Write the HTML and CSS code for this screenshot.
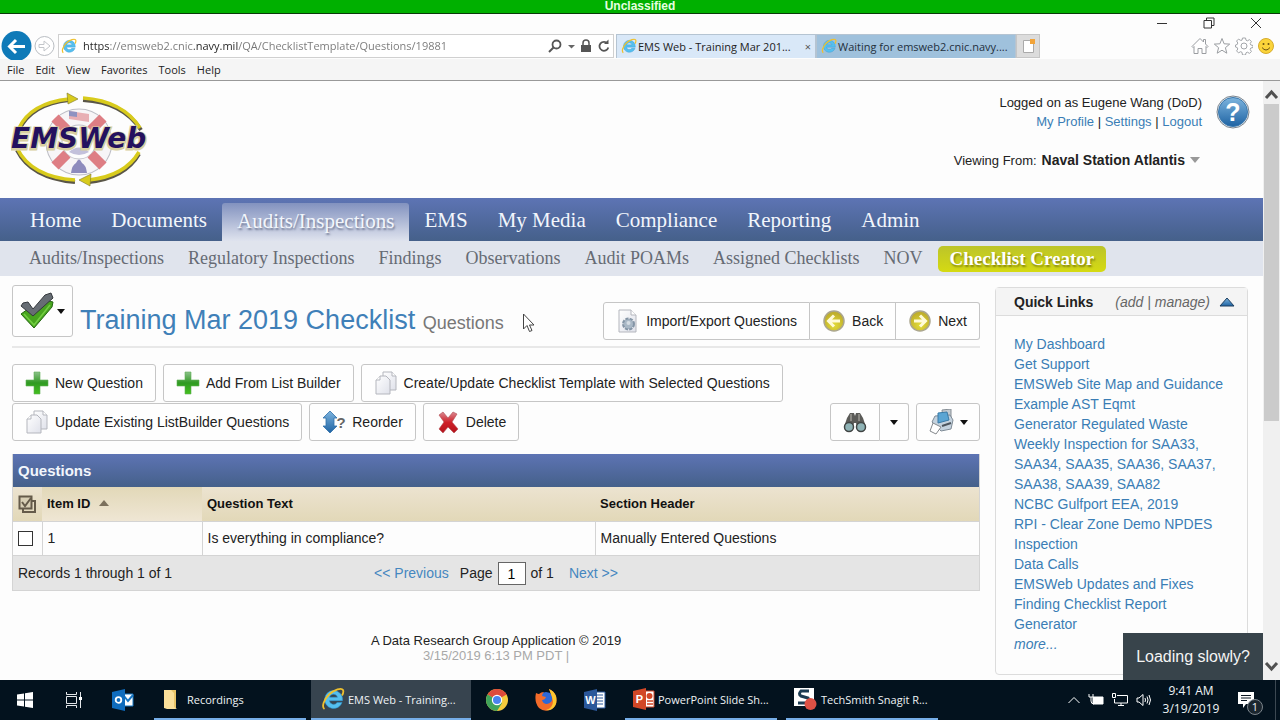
FILE: index.html
```
<!DOCTYPE html>
<html lang="en">
<head>
  <meta charset="UTF-8">
  <meta name="viewport" content="width=device-width, initial-scale=1">
  <title>EMS Web - Training Mar 2019 Checklist</title>
  <link rel="stylesheet" href="styles.css">
</head>
<body>
  <!-- shared icons -->
  <svg class="sprite" width="0" height="0" aria-hidden="true">
    <defs>
      <linearGradient id="greenGrad" x1="0" y1="0" x2="0" y2="1"><stop offset="0" stop-color="#8cc08a"/><stop offset=".5" stop-color="#2f9a22"/><stop offset="1" stop-color="#44c01e"/></linearGradient>
      <linearGradient id="redGrad" x1="0" y1="0" x2="0" y2="1"><stop offset="0" stop-color="#d98a92"/><stop offset=".5" stop-color="#cf1f27"/><stop offset="1" stop-color="#b3141c"/></linearGradient>
      <linearGradient id="blueGrad" x1="0" y1="0" x2="0" y2="1"><stop offset="0" stop-color="#7db4de"/><stop offset="1" stop-color="#1e63a3"/></linearGradient>
      <linearGradient id="pageGrad" x1="0" y1="0" x2="1" y2="1"><stop offset="0" stop-color="#ffffff"/><stop offset="1" stop-color="#dfe1ea"/></linearGradient>
      <radialGradient id="goldGrad" cx=".5" cy=".7" r=".6"><stop offset="0" stop-color="#e3dc3a"/><stop offset="1" stop-color="#bfae2b"/></radialGradient>
    </defs>
    <symbol id="i-plus" viewBox="0 0 24 24"><path d="M9 1h6v8h8v6h-8v8H9v-8H1V9h8z" fill="url(#greenGrad)" stroke="#5fae55" stroke-width=".6"/></symbol>
    <symbol id="i-pages" viewBox="0 0 24 24">
      <path d="M9 1h9l4 4v14H9z" fill="url(#pageGrad)" stroke="#b4b6bd"/>
      <path d="M18 1v4h4" fill="#fff" stroke="#b4b6bd"/>
      <path d="M6 5h6l4 4v14H2V9z" fill="url(#pageGrad)" stroke="#b4b6bd"/>
      <path d="M6 5v4H2" fill="#fff" stroke="#b4b6bd"/>
    </symbol>
    <symbol id="i-ie" viewBox="0 0 24 24">
      <path d="M12.500 3.500a9 9 0 1 0 8.600 12h-5a4.300 4.300 0 0 1-7.800-1.800H21.500A9 9 0 0 0 12.500 3.500zM8.500 10.200a4.200 4.200 0 0 1 8 0z" fill="#55bfee" stroke="#2b93d1" stroke-width=".5" fill-rule="evenodd"/>
      <path d="M3.500 22C.5 20 2.500 13 8 7.500 13.500 2.500 20.500.5 22 3c.7 1.400.2 3.500-1 5.500" fill="none" stroke="#eec02e" stroke-width="1.800"/>
    </symbol>
  </svg>

  <div class="banner">Unclassified</div>

  <!-- browser window -->
  <div class="browser">
    <div class="titlebar">
      <button class="win-btn" aria-label="Minimize"><svg width="12" height="12" viewBox="0 0 12 12"><path d="M1 6.500h10" stroke="#333"/></svg></button>
      <button class="win-btn" aria-label="Restore"><svg width="12" height="12" viewBox="0 0 12 12"><path d="M1 3.500h7.500V11H1zM3.500 3.500V1H11v7.500H8.500" fill="none" stroke="#333"/></svg></button>
      <button class="win-btn" aria-label="Close"><svg width="12" height="12" viewBox="0 0 12 12"><path d="M1 1l10 10M11 1L1 11" stroke="#333"/></svg></button>
    </div>
    <div class="navrow">
      <button class="back" aria-label="Back"><svg width="31" height="29" viewBox="0 0 31 29"><circle cx="15.500" cy="15" r="15" fill="#0f7ab8"/><path d="M24 15.500H9M15 9l-6.500 6.500L15 22" fill="none" stroke="#fff" stroke-width="3"/></svg></button>
      <button class="forward" aria-label="Forward"><svg width="21" height="22" viewBox="0 0 21 22"><circle cx="10.500" cy="11" r="9.500" fill="#fff" stroke="#b9bdc2"/><path d="M5 9.500h5V6l6 5-6 5v-3.500H5z" fill="#fff" stroke="#c3c6ca"/></svg></button>
      <div class="address">
        <svg width="16" height="16"><use href="#i-ie"/></svg>
        <input type="text" class="url" aria-label="Address" value="https://emsweb2.cnic.navy.mil/QA/ChecklistTemplate/Questions/19881">
        <button aria-label="Search"><svg width="14" height="14" viewBox="0 0 14 14"><circle cx="8.500" cy="5.500" r="4" fill="none" stroke="#555" stroke-width="1.800"/><path d="M5.500 8.500L1 13" stroke="#555" stroke-width="2"/></svg></button>
        <button aria-label="Show history"><svg width="7" height="14" viewBox="0 0 7 14"><path d="M0 6h7L3.500 9.500z" fill="#666"/></svg></button>
        <svg width="10" height="14" viewBox="0 0 10 14"><path d="M0 6h10v7H0z" fill="#555"/><path d="M2 6.500V4a3 3 0 0 1 6 0v2.500" fill="none" stroke="#555" stroke-width="1.500"/></svg>
        <button aria-label="Refresh"><svg width="13" height="14" viewBox="0 0 13 14"><path d="M10.500 4.500a4.500 4.500 0 1 0 .8 4" fill="none" stroke="#555" stroke-width="1.800"/><path d="M7 5h4.500V.5z" fill="#555"/></svg></button>
      </div>
      <div class="tabs">
        <button class="tab active"><svg width="16" height="16"><use href="#i-ie"/></svg><span>EMS Web - Training Mar 201...</span><i>×</i></button>
        <button class="tab"><svg width="16" height="16"><use href="#i-ie"/></svg><span>Waiting for emsweb2.cnic.navy....</span></button>
        <button class="new-tab" aria-label="New tab"><svg width="14" height="16" viewBox="0 0 14 16"><path d="M1.500 2.500h7l3 3v9h-10z" fill="#fff" stroke="#aaa"/><path d="M8 1h5v5H8z" fill="#f2a43a"/></svg></button>
      </div>
      <div class="browser-tools">
        <button aria-label="Home"><svg width="18" height="18" viewBox="0 0 18 18"><path d="M1 9.500L9 1.500l3.500 3.500V2.500h2v4.500L17 9.500l-1 1-1-1V16.500h-4v-5H7v5H3v-7l-1 1z" fill="#fff" stroke="#9a9da1"/></svg></button>
        <button aria-label="Favorites"><svg width="18" height="18" viewBox="0 0 18 18"><path d="M9 1.500l2.100 5.300 5.600.3-4.300 3.600 1.400 5.500L9 13.200l-4.800 3 1.400-5.500L1.300 7.100l5.600-.3z" fill="#fff" stroke="#9a9da1"/></svg></button>
        <button aria-label="Tools"><svg width="18" height="18" viewBox="0 0 18 18"><path d="M7.500 1h3l.5 2.200 1.500.6 2-1.200 1.900 2-1.200 1.900.6 1.500 2.200.5v2l-2.200.5-.6 1.500 1.200 2-1.900 1.900-2-1.200-1.500.6-.5 2.200h-3L7 15.300l-1.500-.6-2 1.200-1.900-2 1.200-1.900-.6-1.500L.5 10V8l1.700-.5.6-1.500-1.200-2 1.900-1.900 2 1.200L7 3.200z" fill="#fff" stroke="#a3a6aa"/><circle cx="9" cy="9" r="3" fill="#fff" stroke="#a3a6aa"/></svg></button>
        <button aria-label="Feedback"><svg width="18" height="18" viewBox="0 0 18 18"><circle cx="9" cy="9" r="7.500" fill="#fbd43a" stroke="#d6ab2c"/><circle cx="6.500" cy="7" r="1" fill="#6b5312"/><circle cx="11.500" cy="7" r="1" fill="#6b5312"/><path d="M5 10.500q4 5 8 0" fill="none" stroke="#6b5312"/></svg></button>
      </div>
    </div>
    <div class="menubar">
      <button>File</button><button>Edit</button><button>View</button><button>Favorites</button><button>Tools</button><button>Help</button>
    </div>
  </div>

  <div class="viewport">
    <div class="page">
      <header class="site-header">
        <a class="logo" href="#" aria-label="EMSWeb">
          <svg width="138" height="98" viewBox="0 -1 138 98">
            <!-- life ring -->
            <g opacity=".75">
              <circle cx="68" cy="50" r="25" fill="none" stroke="#a9aab4" stroke-width="17"/>
              <circle cx="68" cy="50" r="25" fill="none" stroke="#f5f3f6" stroke-width="15"/>
              <path d="M56 38L44 26M80 38l12-12M56 62L44 74M80 62l12 12" stroke="#d4545c" stroke-width="10"/>
              <path d="M58 19l20 3v8l-20-3z" fill="#e2969c"/><path d="M58 19l8 1v5l-8-1z" fill="#6a6fae"/>
              <path d="M58 60q10-9 20 0-10 6-20 0z" fill="#b0add0"/>
              <path d="M60 81q1-8 5-10 3-7 6 0 4 2 5 10z" fill="#6a66a8"/>
            </g>
            <g fill="none" stroke="#5a5648" stroke-width="4">
              <path d="M8 38Q20 12 58 8M72 8Q112 10 130 38M128 62Q114 86 78 90M6 58Q20 86 64 90"/>
            </g>
            <g fill="none" stroke="#d8cb1c" stroke-width="3.500">
              <path d="M8 36Q20 11 58 7M72 6Q112 9 129 36M128 60Q114 84 78 88M6 56Q20 85 64 88"/>
            </g>
            <path d="M56 1l11 6-10 5zM80 82l-12 6 11 6z" fill="#d8cb1c" stroke="#7d7727" stroke-width=".6"/>
            <text class="logo-text logo-glow" x="0" y="57">EMSWeb</text>
            <text class="logo-text" x="0" y="56">EMSWeb</text>
          </svg>
        </a>
        <div class="account">
          <div class="account-row">
            <div class="who">
              <div>Logged on as Eugene Wang (DoD)</div>
              <div><a href="#">My Profile</a> | <a href="#">Settings</a> | <a href="#">Logout</a></div>
            </div>
            <a href="#" class="help" aria-label="Help"><svg width="34" height="34" viewBox="0 0 34 34"><circle cx="17" cy="17" r="16" fill="#e6edf4" stroke="#7b858e"/><circle cx="17" cy="17" r="14.500" fill="url(#blueGrad)" stroke="#3a78ad"/><text x="17" y="26" text-anchor="middle" class="help-mark">?</text></svg></a>
          </div>
          <button class="location">Viewing From: <b>Naval Station Atlantis</b><span class="caret grey"></span></button>
        </div>
      </header>

      <nav class="main-nav">
        <a href="#">Home</a>
        <a href="#">Documents</a>
        <a href="#" class="active">Audits/Inspections</a>
        <a href="#">EMS</a>
        <a href="#">My Media</a>
        <a href="#">Compliance</a>
        <a href="#">Reporting</a>
        <a href="#">Admin</a>
      </nav>
      <nav class="sub-nav">
        <a href="#">Audits/Inspections</a>
        <a href="#">Regulatory Inspections</a>
        <a href="#">Findings</a>
        <a href="#">Observations</a>
        <a href="#">Audit POAMs</a>
        <a href="#">Assigned Checklists</a>
        <a href="#">NOV</a>
        <a href="#" class="active">Checklist Creator</a>
      </nav>

      <div class="columns">
        <main>
          <div class="page-title">
            <button class="btn check-menu" aria-label="Checklist menu">
              <svg width="34" height="38" viewBox="0 0 34 38"><path d="M1 22l7-5 5 6L29 9l4 1-1 5-18 21z" fill="#48a51f" stroke="#256814"/><path d="M1 14l2-3 5-1 5 7L25 3l6-2 2 5-20 18z" fill="#676d74" stroke="#35393d"/><path d="M4 22l10 11 16-20" fill="none" stroke="#74cf43" stroke-width="1.500"/></svg>
              <span class="caret"></span>
            </button>
            <h1>Training Mar 2019 Checklist <small>Questions</small></h1>
            <div class="btn-group">
              <button class="btn"><svg width="24" height="24" viewBox="0 0 24 24"><path d="M3 1h12l5 5v17H3z" fill="url(#pageGrad)" stroke="#b4b6bd"/><path d="M15 1v5h5" fill="#fff" stroke="#b4b6bd"/><circle cx="12.500" cy="15" r="5" fill="#9faebd" stroke="#8495a6" stroke-width="3" stroke-dasharray="3 1"/><circle cx="12.500" cy="15" r="4.500" fill="#a9b8c6"/><circle cx="12.500" cy="14" r="2" fill="#d5dde4"/></svg>Import/Export Questions</button>
              <button class="btn"><svg width="24" height="24" viewBox="0 0 24 24"><circle cx="12" cy="12" r="10" fill="url(#goldGrad)" stroke="#aaa58e" stroke-width="1.500"/><path d="M18 12H7M12 6.500L6.500 12l5.500 5.500" fill="none" stroke="#fffbd8" stroke-width="3"/></svg>Back</button>
              <button class="btn"><svg width="24" height="24" viewBox="0 0 24 24"><circle cx="12" cy="12" r="10" fill="url(#goldGrad)" stroke="#aaa58e" stroke-width="1.500"/><path d="M6 12h11M12 6.500l5.500 5.500-5.500 5.500" fill="none" stroke="#fffbd8" stroke-width="3"/></svg>Next</button>
            </div>
            <svg class="pointer" width="14" height="20" viewBox="0 0 14 20"><path d="M1.500 1v15l3.500-3.500 2.500 6 2.500-1-2.500-5.500H12z" fill="#fff" stroke="#444"/></svg>
          </div>

          <div class="toolbar">
            <div class="actions">
              <button class="btn"><svg width="24" height="24"><use href="#i-plus"/></svg>New Question</button>
              <button class="btn"><svg width="24" height="24"><use href="#i-plus"/></svg>Add From List Builder</button>
              <button class="btn"><svg width="24" height="24"><use href="#i-pages"/></svg>Create/Update Checklist Template with Selected Questions</button>
              <button class="btn"><svg width="24" height="24"><use href="#i-pages"/></svg>Update Existing ListBuilder Questions</button>
              <button class="btn"><svg width="24" height="24" viewBox="0 0 24 24"><path d="M8 1l7 7h-3v8h3l-7 7-7-7h3V8H1z" fill="url(#blueGrad)" stroke="#2f6fa8" stroke-width=".8"/><text x="19" y="18" text-anchor="middle" class="order-mark">?</text></svg>Reorder</button>
              <button class="btn"><svg width="24" height="24" viewBox="0 0 24 24"><path d="M3 5l4-3 5 6 5-6 4 2-5 8 6 7-4 4-6-6-5 6-4-4 5-7z" fill="url(#redGrad)" stroke="#b04a50" stroke-width=".6"/></svg>Delete</button>
            </div>
            <div class="view-tools">
              <div class="btn-group">
                <button class="btn" aria-label="Find"><svg width="24" height="24" viewBox="0 0 24 24"><path d="M7 3h4l1 3 1-3h4l3 5 3 9-1 3h-7l-2-7h-2l-2 7H2l-1-3 3-9z" fill="#5b5b58"/><path d="M8 4v7M16 4v7" stroke="#9c9a92" stroke-width="1.500"/><circle cx="6" cy="17" r="4.500" fill="#8fb3b6" stroke="#414544" stroke-width="1.500"/><circle cx="18" cy="17" r="4.500" fill="#8fb3b6" stroke="#414544" stroke-width="1.500"/></svg></button>
                <button class="btn drop" aria-label="Find options"><span class="caret"></span></button>
              </div>
              <button class="btn print" aria-label="Print"><svg width="26" height="26" viewBox="0 0 26 26"><path d="M14 1l9-1v9l-8 1z" fill="#c3cad0" stroke="#868e95"/><path d="M7 7l15-1 3 5-2 9-10 2-9-9z" fill="#c4d2de" stroke="#7f8b96"/><path d="M10 4l9-1 2 8-11 3z" fill="#5ba5d3" stroke="#3a7ba7"/><path d="M5 14l8 4-5 7-6-3z" fill="#fff" stroke="#85898d"/><path d="M14 17l9-3" stroke="#4c555d" stroke-width="2"/></svg><span class="caret"></span></button>
            </div>
          </div>

          <div class="grid">
            <h2>Questions</h2>
            <table>
              <thead>
                <tr>
                  <th class="col-check"><svg width="18" height="18" viewBox="0 0 18 18"><path d="M5 14v3h12V6h-3" fill="none" stroke="#655b4a" stroke-width="2"/><path d="M1.500 1.500h12v12h-12z" fill="#d8cfb5" stroke="#655b4a" stroke-width="2"/><path d="M4 7l3 4 6-8" fill="none" stroke="#655b4a" stroke-width="2"/></svg></th>
                  <th class="col-id sorted">Item ID <span class="sort-up"></span></th>
                  <th class="col-text">Question Text</th>
                  <th>Section Header</th>
                </tr>
              </thead>
              <tbody>
                <tr>
                  <td class="col-check"><input type="checkbox" aria-label="Select item 1"></td>
                  <td>1</td>
                  <td>Is everything in compliance?</td>
                  <td>Manually Entered Questions</td>
                </tr>
              </tbody>
            </table>
            <div class="pager">
              <span class="records">Records 1 through 1 of 1</span>
              <div class="pages">
                <a href="#">&lt;&lt; Previous</a>
                <label for="pageNo">Page</label>
                <input type="text" id="pageNo" value="1">
                <span class="of">of 1</span>
                <a href="#">Next &gt;&gt;</a>
              </div>
            </div>
          </div>

          <footer>
            <div>A Data Research Group Application © 2019</div>
            <div class="stamp">3/15/2019 6:13 PM PDT |</div>
          </footer>
        </main>

        <aside class="quick-links">
          <div class="panel-head">
            <h3>Quick Links</h3>
            <span class="manage">(<a href="#">add</a> | <a href="#">manage</a>)</span>
            <button aria-label="Collapse"><svg width="16" height="10" viewBox="0 0 16 10"><path d="M1 9l7-8 7 8z" fill="url(#blueGrad)" stroke="#1f3f5f"/></svg></button>
          </div>
          <ul>
            <li><a href="#">My Dashboard</a></li>
            <li><a href="#">Get Support</a></li>
            <li><a href="#">EMSWeb Site Map and Guidance</a></li>
            <li><a href="#">Example AST Eqmt</a></li>
            <li><a href="#">Generator Regulated Waste Weekly Inspection for SAA33, SAA34, SAA35, SAA36, SAA37, SAA38, SAA39, SAA82</a></li>
            <li><a href="#">NCBC Gulfport EEA, 2019</a></li>
            <li><a href="#">RPI - Clear Zone Demo NPDES Inspection</a></li>
            <li><a href="#">Data Calls</a></li>
            <li><a href="#">EMSWeb Updates and Fixes</a></li>
            <li><a href="#">Finding Checklist Report Generator</a></li>
            <li><a href="#"><em>more...</em></a></li>
          </ul>
        </aside>
      </div>
      <div class="loading">Loading slowly?</div>
    </div>
    <div class="scrollbar">
      <svg width="15" height="23" viewBox="0 0 15 23"><path d="M2 17l5.500-6 5.500 6" fill="none" stroke="#505050" stroke-width="3"/></svg>
      <div class="thumb"></div>
      <svg width="15" height="23" viewBox="0 0 15 23"><path d="M2 6l5.500 6L13 6" fill="none" stroke="#505050" stroke-width="3"/></svg>
    </div>
  </div>

  <!-- taskbar -->
  <div class="taskbar">
    <button class="task-icon" aria-label="Start"><svg width="16" height="16" viewBox="0 0 16 16"><path d="M0 2.500L7 1.500V7.500H0zM8 1.300L16 0v7.500H8zM0 8.500h7v6L0 13.500zM8 8.500h8V16l-8-1.300z" fill="#fff"/></svg></button>
    <button class="task-icon" aria-label="Task view"><svg width="16" height="16" viewBox="0 0 16 16"><path d="M.5 0v2.500h10V0M.5 16v-2.500h10V16M.5 4.500h10v7H.5zM14.500 0v16" fill="none" stroke="#e4e7ea"/><path d="M13 5h3v3h-3z" fill="#fff"/></svg></button>
    <button class="task-icon" aria-label="Outlook"><svg width="22" height="22" viewBox="0 0 22 22"><path d="M11 5h10v12H11z" fill="#fff" stroke="#1676c4"/><path d="M12 7l4 5 5-6" fill="none" stroke="#1676c4" stroke-width="2"/><path d="M0 3l13-3v22L0 19z" fill="#0f6cbd"/><circle cx="6.500" cy="11" r="2.800" fill="none" stroke="#fff" stroke-width="1.800"/></svg></button>
    <button class="task folder"><svg width="22" height="22" viewBox="0 0 22 22"><path d="M2 2h12v18H2z" fill="#e9c568"/><path d="M2 2h7l3 3v14l3 2H5l-3-1z" fill="#fbe09a"/></svg><span>Recordings</span></button>
    <button class="task current"><svg width="24" height="24"><use href="#i-ie"/></svg><span>EMS Web - Training...</span></button>
    <button class="task-icon" aria-label="Chrome"><svg width="22" height="22" viewBox="0 0 22 22"><circle cx="11" cy="11" r="11" fill="#f7cb3c"/><path d="M11 11L1.500 5.500A11 11 0 0 1 20.500 5.500z" fill="#de4b3b"/><path d="M11 11L1.500 5.500A11 11 0 0 0 11 22l5-8z" fill="#3fa35b"/><path d="M11 6h9.800a11 11 0 0 0-2-3L11 1 6 8z" fill="#de4b3b"/><circle cx="11" cy="11" r="5.200" fill="#fff"/><circle cx="11" cy="11" r="4" fill="#4a83ee"/></svg></button>
    <button class="task-icon" aria-label="Firefox"><svg width="22" height="22" viewBox="0 0 22 22"><circle cx="11" cy="12" r="9" fill="#2d68d8"/><path d="M1 4q2 1 3 1 2-2 5-2-2 2-2 4l4 1q-1 3-4 3 1 4 5 4 6-1 5-7-1-4-3-8 5 2 7 7 2 9-4 13-7 4-13-1Q-1 13 1 4z" fill="#f26b2a"/><path d="M14 0q5 2 7 7 2 9-4 13-3 2-6 1 7-2 7-9-1-5-4-12z" fill="#fdc62f"/></svg></button>
    <button class="task-icon" aria-label="Word"><svg width="22" height="22" viewBox="0 0 22 22"><path d="M11 3h10v16H11z" fill="#fff" stroke="#2b579a"/><path d="M13 6h6M13 9h6M13 12h6M13 15h6" stroke="#2b579a"/><path d="M0 3l13-3v22L0 19z" fill="#2b579a"/><text x="6.500" y="15" text-anchor="middle" class="app-letter">W</text></svg></button>
    <button class="task ppt"><svg width="22" height="22" viewBox="0 0 22 22"><path d="M11 3h10v16H11z" fill="#fff" stroke="#d24726"/><path d="M14 13h6M14 16h6" stroke="#d24726" stroke-width="1.500"/><circle cx="16.500" cy="8" r="3" fill="#d24726"/><path d="M0 3l13-3v22L0 19z" fill="#d24726"/><text x="6.500" y="15" text-anchor="middle" class="app-letter">P</text></svg><span>PowerPoint Slide Sh...</span></button>
    <button class="task snagit"><svg width="24" height="24" viewBox="0 0 24 24"><path d="M0 1h20v18H0z" fill="#fff"/><path d="M15 4H7q-3 3 0 5l7 2q2 4-2 5H4" fill="none" stroke="#1b3b52" stroke-width="3"/><circle cx="16.500" cy="17" r="6" fill="#dd5145"/></svg><span>TechSmith Snagit R...</span></button>
    <div class="tray">
      <svg width="12" height="8" viewBox="0 0 12 8"><path d="M.5 7L6 1.500 11.500 7" fill="none" stroke="#fff"/></svg>
      <svg width="16" height="14" viewBox="0 0 16 14"><path d="M5 4h10v7H5z" fill="#fff" stroke="#fff"/><path d="M1 1v3h4V1M3 4v4q0 3 3 3" fill="none" stroke="#fff"/></svg>
      <svg width="16" height="14" viewBox="0 0 16 14"><path d="M5 2.500h10.500v7.500H2.500V6M6 12.500h6M9 10v2.500M.5.500h3v4h-3z" fill="none" stroke="#fff"/></svg>
      <svg width="16" height="14" viewBox="0 0 16 14"><path d="M1 5h2l4-3.500v11L3 9H1zM9 5q1 2 0 4M11 3.500q2 3.500 0 7M13 2q3 5 0 10" fill="none" stroke="#fff"/></svg>
      <div class="clock"><div>9:41 AM</div><div>3/19/2019</div></div>
      <button class="notify" aria-label="Notifications"><svg width="16" height="16" viewBox="0 0 16 16"><path d="M0 0h16v12H8l-3 4v-4H0z" fill="#fff"/><path d="M3 3.500h10M3 6h10M3 8.500h6" stroke="#0b1722"/></svg><span class="badge">1</span></button>
    </div>
  </div>
</body>
</html>
```
FILE: styles.css
```
* {
  box-sizing: border-box;
}
body {
  margin: 0;
  height: 100vh;
  display: flex;
  flex-direction: column;
  overflow: hidden;
  background: #fdfdfd;
  color: #222;
  font-family: "Liberation Sans", Arial, sans-serif;
  font-size: 14px;
}
a {
  color: #3a7db5;
  text-decoration: none;
}
button {
  font: inherit;
  color: inherit;
  background: none;
  border: none;
  padding: 0;
}
svg {
  display: block;
  flex: none;
}
h1, h2, h3, ul {
  margin: 0;
  padding: 0;
}
.sprite {
  position: absolute;
}

/* classification banner */
.banner {
  height: 14px;
  background: #00b000;
  border-bottom: 1px solid #0a3a0a;
  color: #e6ffe0;
  font-size: 12px;
  font-weight: bold;
  line-height: 13px;
  text-align: center;
}

/* browser chrome */
.browser {
  font-family: "Open Sans", "Segoe UI", sans-serif;
  font-size: 11px;
  border-bottom: 1px solid #999;
}
.titlebar {
  height: 18px;
  display: flex;
  justify-content: flex-end;
  align-items: center;
  gap: 35px;
  padding-right: 18px;
}
.navrow {
  display: flex;
  align-items: center;
  height: 27px;
  padding-left: 1px;
}
.forward {
  margin: 0 3px 0 2px;
}
.address {
  flex: 1;
  display: flex;
  align-items: center;
  gap: 6px;
  height: 24px;
  margin-right: 2px;
  padding: 0 3px 0 2px;
  border: 1px solid #d0d0d0;
  background: #fff;
}
/* scheme and domain are darker than the rest of the address */
.url {
  flex: 1;
  min-width: 0;
  padding: 0;
  border: none;
  outline: none;
  font: inherit;
  background: linear-gradient(90deg, #222 27px, #777 27px, #777 111px, #222 111px, #222 155px, #777 155px);
  background-clip: text;
  -webkit-background-clip: text;
  color: transparent;
}
.tabs {
  display: flex;
  height: 24px;
}
.tab {
  display: flex;
  align-items: center;
  gap: 1px;
  width: 200px;
  padding: 0 4px;
  border: 1px solid #b5c4d2;
  border-bottom: none;
  background: #9fc1dc;
  color: #23303c;
  text-align: left;
  white-space: nowrap;
}
.tab.active {
  background: #d9e8f8;
  color: #222;
}
.tab span {
  flex: 1;
}
.tab i {
  font-style: normal;
  color: #555;
}
.new-tab {
  width: 24px;
  padding: 0 5px;
  border: 1px solid #c6c6c6;
  background: #dcdcdc;
}
.browser-tools {
  display: flex;
  justify-content: flex-end;
  gap: 4px;
  width: 240px;
  padding-right: 5px;
}
.menubar {
  display: flex;
  gap: 11px;
  height: 21px;
  padding-left: 7px;
  background: #f5f5f5;
  line-height: 21px;
}

/* page area */
.viewport {
  flex: 1;
  min-height: 0;
  display: flex;
}
.page {
  position: relative;
  flex: 1;
  min-width: 0;
  overflow: hidden;
}
.site-header {
  display: flex;
  justify-content: space-between;
  height: 117px;
  padding: 10px 13px 0 11px;
}
.account {
  display: flex;
  flex-direction: column;
  align-items: flex-end;
  gap: 21px;
  font-size: 13px;
}
.account-row {
  display: flex;
  gap: 14px;
  padding-top: 2px;
}
.who {
  line-height: 19px;
  text-align: right;
}
.help {
  padding-top: 2px;
}
.location {
  display: flex;
  align-items: center;
  gap: 5px;
  margin-right: 50px;
}
.location b {
  font-size: 14px;
}
.logo-text {
  font: italic bold 28px "DejaVu Sans", Verdana, sans-serif;
  fill: #24115f;
}
.logo-glow {
  fill: #d8cb1c;
  stroke: #d8cfa0;
  stroke-width: 3px;
}
.help-mark {
  font: bold 25px "Liberation Sans", Arial, sans-serif;
  fill: #fff;
}
.order-mark {
  font: bold 15px "Liberation Sans", Arial, sans-serif;
  fill: #666;
}
.app-letter {
  font: bold 11px "Liberation Sans", Arial, sans-serif;
  fill: #fff;
}
.caret {
  display: inline-block;
  border: 4px solid transparent;
  border-top: 5px solid #111;
  border-bottom: none;
}
.caret.grey {
  border-width: 5px;
  border-top: 6px solid #999;
  border-bottom: none;
}

.main-nav {
  display: flex;
  align-items: flex-end;
  height: 43px;
  padding-left: 15px;
  background: linear-gradient(#5d74b4, #45608a);
  font-family: "Liberation Serif", Georgia, serif;
  font-size: 21px;
}
.main-nav a {
  height: 38px;
  padding: 0 15px;
  border-radius: 3px 3px 0 0;
  color: #f2f6fc;
  line-height: 34px;
}
.main-nav a.active {
  background: linear-gradient(#8292bf, #dfe3ee);
  line-height: 36px;
  text-shadow: 1px 2px 2px rgba(60,70,100,0.6);
}
.sub-nav {
  display: flex;
  align-items: center;
  gap: 24px;
  height: 35px;
  padding-left: 29px;
  background: #e0e4ed;
  font-family: "Liberation Serif", Georgia, serif;
  font-size: 18px;
}
.sub-nav a {
  color: #666b74;
}
.sub-nav a.active {
  margin-left: -9px;
  padding: 0 12px;
  border-radius: 5px;
  background: linear-gradient(#bcc42a, #d5da12);
  color: #fff;
  font-size: 19px;
  font-weight: bold;
  line-height: 26px;
  text-shadow: 1px 2px 2px rgba(80,80,0,0.6);
}

.columns {
  display: flex;
  align-items: flex-start;
  gap: 15px;
  padding: 9px 15px 0 12px;
}
main {
  flex: 1;
  min-width: 0;
}

/* buttons */
.btn {
  display: flex;
  align-items: center;
  justify-content: center;
  gap: 6px;
  height: 38px;
  padding: 0 12px;
  border: 1px solid #c6c6c6;
  border-radius: 3px;
  background: #fefefe;
  color: #222;
  white-space: nowrap;
}
.btn-group {
  display: flex;
}
.btn-group .btn {
  border-radius: 0;
}
.btn-group .btn:first-child {
  border-radius: 3px 0 0 3px;
}
.btn-group .btn:last-child {
  border-radius: 0 3px 3px 0;
}
.btn-group .btn + .btn {
  border-left: none;
}

.page-title {
  position: relative;
  display: flex;
  align-items: flex-end;
  height: 63px;
  padding-bottom: 6px;
  border-bottom: 2px solid #e8e8e8;
}
.check-menu {
  align-self: flex-start;
  width: 61px;
  height: 52px;
  padding: 0;
  gap: 3px;
}
.page-title h1 {
  flex: 1;
  padding-left: 7px;
  color: #3f80b8;
  font-size: 27px;
  font-weight: normal;
  line-height: 34px;
}
.page-title small {
  color: #777;
  font-size: 18px;
}
.pointer {
  position: absolute;
  left: 510px;
  top: 28px;
}
.toolbar {
  display: flex;
  align-items: flex-end;
  margin: 16px 0 13px;
}
.actions {
  flex: 1;
  display: flex;
  flex-wrap: wrap;
  gap: 1px 7px;
}
.view-tools {
  display: flex;
  gap: 7px;
}
.btn.drop {
  width: 29px;
  padding: 0;
}
.btn.print {
  width: 64px;
  padding: 0;
}

/* questions grid */
.grid {
  border: 1px solid #d4d4d4;
  border-top: none;
}
.grid h2 {
  padding-left: 5px;
  background: linear-gradient(#5d74b4, #45608a);
  color: #f2f6fc;
  font-size: 15px;
  line-height: 33px;
}
.grid table {
  width: 100%;
  border-collapse: collapse;
  table-layout: fixed;
}
.grid th,
.grid td {
  height: 34px;
  padding: 0 5px;
  text-align: left;
}
.grid th {
  background: linear-gradient(#ece3d0, #e2d8b8);
  color: #111;
  font-size: 13px;
}
.grid th.sorted {
  background: linear-gradient(#e2d8b8, #efe6d4);
}
.grid td {
  border-left: 1px solid #d4d4d4;
  border-top: 1px solid #d4d4d4;
}
.grid td:first-child {
  border-left: none;
}
.col-check {
  width: 29px;
}
.col-id {
  width: 160px;
}
.col-text {
  width: 393px;
}
.sort-up {
  display: inline-block;
  margin: 0 0 2px 5px;
  border: 5px solid transparent;
  border-bottom: 6px solid #7b705c;
  border-top: none;
}
input[type="checkbox"] {
  display: block;
  appearance: none;
  width: 15px;
  height: 15px;
  margin: 0;
  border: 1px solid #333;
  background: #fff;
}
.pager {
  display: grid;
  grid-template-columns: 1fr auto 1fr;
  align-items: center;
  height: 35px;
  padding: 0 5px;
  border-top: 1px solid #d4d4d4;
  background: #e5e5e5;
}
.pages {
  display: flex;
  align-items: center;
}
.pages a {
  color: #4587c0;
}
.pages label {
  margin: 0 5px 0 11px;
}
.pages input {
  width: 28px;
  height: 23px;
  padding: 2px 0 0;
  border: 1px solid #666;
  font: inherit;
  text-align: center;
}
.pages .of {
  margin: 0 15px 0 5px;
}

footer {
  margin-top: 42px;
  font-size: 13px;
  line-height: 15px;
  text-align: center;
}
.stamp {
  color: #a8a8a8;
}

/* quick links */
.quick-links {
  width: 253px;
  margin-top: 2px;
  border: 1px solid #dcdcdc;
  border-radius: 4px;
}
.panel-head {
  display: flex;
  align-items: center;
  height: 28px;
  padding: 0 12px 0 18px;
  border-bottom: 1px solid #dcdcdc;
  background: #f4f4f4;
}
.panel-head h3 {
  flex: 1;
  font-size: 14px;
}
.manage {
  margin-right: 9px;
  font-style: italic;
  color: #666;
}
.manage a {
  color: #666;
}
.quick-links ul {
  padding: 18px 18px 20px;
  list-style: none;
  line-height: 20px;
}

.loading {
  position: absolute;
  right: 0;
  bottom: 0;
  padding: 0 13px;
  background: #38444b;
  color: #f4f4f4;
  font-size: 16px;
  line-height: 47px;
}

.scrollbar {
  display: flex;
  flex-direction: column;
  justify-content: space-between;
  width: 17px;
  padding: 0 1px;
  background: #f0f0f0;
}
.scrollbar .thumb {
  flex: 0 0 53%;
  margin-bottom: auto;
  background: #cbcbcb;
}

/* taskbar */
.taskbar {
  display: flex;
  height: 40px;
  background: #03121e;
  color: #eef2f5;
  font-family: "Open Sans", "Segoe UI", sans-serif;
  font-size: 11px;
}
.task-icon {
  display: flex;
  align-items: center;
  justify-content: center;
  width: 49px;
}
.task {
  display: flex;
  align-items: center;
  gap: 3px;
  width: 152px;
  padding-left: 8px;
  border-bottom: 2px solid #76aee8;
  white-space: nowrap;
}
.task.folder {
  margin-left: 7px;
}
.task.current {
  width: 160px;
  margin: 0 1px 0 5px;
  padding-left: 10px;
  background: #37444f;
}
.task.ppt {
  margin: 0 9px 0 6px;
}
.tray {
  display: flex;
  align-items: center;
  gap: 8px;
  margin-left: auto;
}
.clock {
  width: 62px;
  font-size: 12px;
  text-align: center;
  line-height: 18px;
}
.notify {
  position: relative;
  width: 46px;
  height: 40px;
  padding-left: 8px;
  margin-right: 4px;
  border-right: 1px solid #3c4852;
}
.badge {
  position: absolute;
  left: 17px;
  top: 19px;
  width: 16px;
  height: 16px;
  border: 1px solid #7c858c;
  border-radius: 50%;
  background: #1b262f;
  line-height: 14px;
}
```
